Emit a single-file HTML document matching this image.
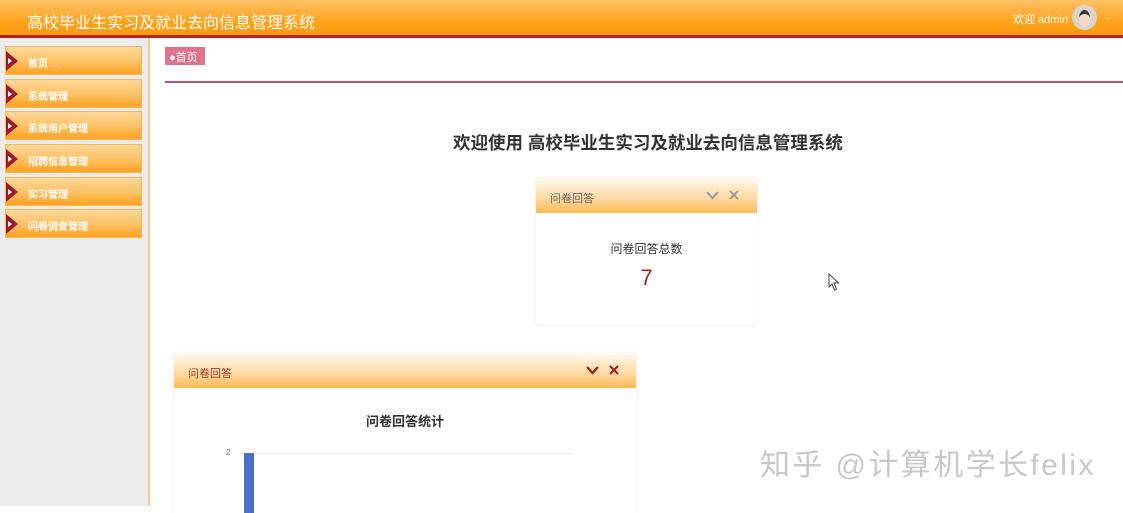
<!DOCTYPE html>
<html><head><meta charset="utf-8"><style>
*{margin:0;padding:0;box-sizing:border-box}
body{width:1123px;height:506px;overflow:hidden;background:#fff;font-family:"Liberation Sans","Noto Sans CJK SC",sans-serif;position:relative}
.hdr{position:absolute;left:0;top:0;width:1123px;height:38px;background:linear-gradient(#fcc266,#fea31c 60%,#fb9a10);border-bottom:3px solid #b3241a}
.hdr .t{position:absolute;left:27px;top:9px;color:#fff;font-size:16px}
.hdr .u{position:absolute;left:1013px;top:11px;color:#fff;font-size:11px}
.av{position:absolute;left:1072px;top:5px;width:25px;height:25px;border-radius:50%;background:#d9d4cc}
.av:after{content:"";position:absolute;left:7px;top:5px;width:11px;height:13px;border-radius:50%;background:#f6dcc4;border-top:4px solid #333}
.dd{position:absolute;left:1104px;top:12px;color:#f8d9a0;font-size:10px}
.side{position:absolute;left:0;top:38px;width:150px;height:468px;background:#ececec;border-right:2px solid #f7c98a}
.mi{position:absolute;left:5px;width:137px;height:29px;background:linear-gradient(#fed899,#fdc36b 50%,#fea21f);border:1px solid #f2b860;color:#fff;font-size:10px;font-weight:bold;padding:8px 0 0 22px}
.mi:before{content:"";position:absolute;left:0;top:4px;border-left:12px solid #a1192a;border-top:10px solid transparent;border-bottom:10px solid transparent}
.mi:after{content:"";position:absolute;left:2px;top:11px;border-left:4px solid #fff;border-top:3px solid transparent;border-bottom:3px solid transparent}
.tag{position:absolute;left:165px;top:47px;width:40px;height:18px;background:#e0738a;color:#fff;font-size:11px;padding:2px 0 0 4px}
.line{position:absolute;left:165px;top:81px;width:958px;height:2px;background:#b5566f}
.welcome{position:absolute;left:453px;top:130px;font-size:17.5px;font-weight:bold;color:#333;white-space:nowrap}
.card{position:absolute;background:#fff;box-shadow:0 0 3px rgba(0,0,0,.12)}
.ch{height:35px;background:linear-gradient(#fffaf0,#fed8a0 60%,#fdb953);font-size:11px;padding:12px 0 0 14px;position:relative}
.ch svg{position:absolute;top:12px}
.wm{position:absolute;left:760px;top:440px;font-size:30px;color:#c8c8c8;letter-spacing:2.4px;white-space:nowrap}
</style></head><body>
<div class="hdr"><div class="t">高校毕业生实习及就业去向信息管理系统</div><div class="u">欢迎 admin</div><div class="av"></div><div class="dd">⌄</div></div>
<div class="side">
<div class="mi" style="top:8px">首页 <span style="font-weight:normal;color:#fde3b8">⌄</span></div>
<div class="mi" style="top:41px">系统管理</div>
<div class="mi" style="top:73px">系统用户管理</div>
<div class="mi" style="top:106px">招聘信息管理</div>
<div class="mi" style="top:139px">实习管理</div>
<div class="mi" style="top:171px">问卷调查管理</div>
</div>
<div class="tag">●首页</div>
<div class="line"></div>
<div class="welcome">欢迎使用 高校毕业生实习及就业去向信息管理系统</div>
<div class="card" style="left:536px;top:178px;width:221px;height:146px">
<div class="ch" style="color:#666">问卷回答
<svg style="left:170px" width="13" height="10" viewBox="0 0 13 10"><path d="M1 2L6.5 8L12 2" stroke="#999" stroke-width="2" fill="none"/></svg>
<svg style="left:193px" width="10" height="10" viewBox="0 0 10 10"><path d="M1 1L9 9M9 1L1 9" stroke="#999" stroke-width="1.8"/></svg></div>
<div style="text-align:center;font-size:12px;color:#333;margin-top:27px">问卷回答总数</div>
<div style="text-align:center;font-size:22px;color:#a4231c;margin-top:8px">7</div>
</div>
<div class="card" style="left:174px;top:353px;width:462px;height:160px">
<div class="ch" style="color:#9b3a2b">问卷回答
<svg style="left:412px" width="13" height="10" viewBox="0 0 13 10"><path d="M1 2L6.5 8L12 2" stroke="#a4231c" stroke-width="2.4" fill="none"/></svg>
<svg style="left:435px" width="10" height="10" viewBox="0 0 10 10"><path d="M1 1L9 9M9 1L1 9" stroke="#a4231c" stroke-width="2.2"/></svg></div>
<div style="text-align:center;font-size:13px;font-weight:bold;color:#333;margin-top:23px">问卷回答统计</div>
<div style="position:absolute;left:52px;top:95px;font-size:8px;color:#666">2</div>
<div style="position:absolute;left:66px;top:100px;width:333px;height:1px;background:#e0e6ee"></div>
<div style="position:absolute;left:70px;top:100px;width:10px;height:60px;background:#4a6fc6"></div>
</div>
<svg style="position:absolute;left:828px;top:273px" width="12" height="18" viewBox="0 0 12 18"><path d="M1 1L1 14L4 11L6.5 17L8.5 16L6 10L10.5 10Z" fill="#fff" stroke="#444" stroke-width="1"/></svg>
<div class="wm">知乎 @计算机学长felix</div>
</body></html>
